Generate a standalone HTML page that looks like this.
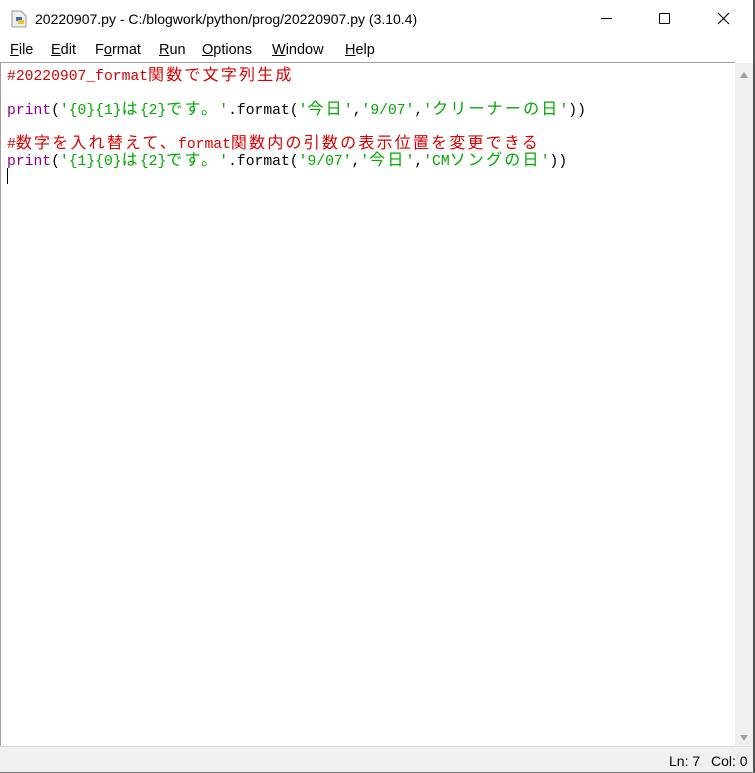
<html><head><style>
body{margin:0;width:755px;height:773px;background:#fff;font-family:"Liberation Sans",sans-serif;position:relative;overflow:hidden}
.win{position:absolute;left:0;top:0;width:753px;height:771px;border-right:2px solid #555;border-bottom:2px solid #777;}
.title{position:absolute;top:0;left:0;width:753px;height:38px;background:#fff}
.title .t{position:absolute;left:35px;top:11px;font-size:14px;color:#000}
.menu{position:absolute;top:38px;left:0;height:24px;width:753px;font-size:14.5px}
.menu span{position:absolute;top:4px}
.menu u{text-decoration:underline}
.ed{position:absolute;left:0;top:62px;width:734px;height:684px;border-top:1px solid #a0a0a0;border-left:1px solid #a0a0a0}
.code{position:absolute;left:7px;top:65px;font-family:"Liberation Mono",monospace;font-size:14.7px;white-space:pre}
.code div{height:17px;line-height:17px;overflow:visible}
.j{font-family:"Noto Sans CJK JP",sans-serif;font-size:16px;letter-spacing:2.2px;line-height:17px}
.c{color:#dd0000}.p{color:#900090}.s{color:#00aa00}
.sb{position:absolute;left:735px;top:63px;width:18px;height:683px;background:#f0f0f0}
.st{position:absolute;left:0;top:746px;width:753px;height:25px;background:#f0f0f0;border-top:1px solid #ddd;font-size:14px}
</style></head><body>
<div class="win">
<div class="title">
<svg style="position:absolute;left:11px;top:10px" width="16" height="18"><path d="M1 1h9l5 5v11H1z" fill="#eee" stroke="#999"/><rect x="5" y="7" width="6" height="4" fill="#3a6fb0"/><rect x="7" y="10" width="6" height="4" fill="#f0c030"/></svg>
<div class="t">20220907.py - C:/blogwork/python/prog/20220907.py (3.10.4)</div>
<div style="position:absolute;left:601px;top:18px;width:11px;height:1px;background:#000"></div>
<div style="position:absolute;left:659px;top:13px;width:9px;height:9px;border:1px solid #000;border-radius:1px"></div>
<svg style="position:absolute;left:717px;top:12px" width="13" height="13"><path d="M1 1L12 12M12 1L1 12" stroke="#000" stroke-width="1.1"/></svg>
</div>
<div class="menu">
<span style="left:10px"><u>F</u>ile</span>
<span style="left:51px"><u>E</u>dit</span>
<span style="left:95px">F<u>o</u>rmat</span>
<span style="left:159px"><u>R</u>un</span>
<span style="left:202px"><u>O</u>ptions</span>
<span style="left:272px"><u>W</u>indow</span>
<span style="left:345px"><u>H</u>elp</span>
</div>
<div class="ed"></div>
<div class="code"><div><span class="c">#20220907_format<span class="j">関数で文字列生成</span></span></div><div> </div><div><span class="p">print</span>(<span class="s">'{0}{1}<span class="j">は</span>{2}<span class="j">です。</span>'</span>.format(<span class="s">'<span class="j">今日</span>'</span>,<span class="s">'9/07'</span>,<span class="s">'<span class="j">クリーナーの日</span>'</span>))</div><div> </div><div><span class="c">#<span class="j">数字を入れ替えて、</span>format<span class="j">関数内の引数の表示位置を変更できる</span></span></div><div><span class="p">print</span>(<span class="s">'{1}{0}<span class="j">は</span>{2}<span class="j">です。</span>'</span>.format(<span class="s">'9/07'</span>,<span class="s">'<span class="j">今日</span>'</span>,<span class="s">'CM<span class="j">ソングの日</span>'</span>))</div></div>
<div style="position:absolute;left:7px;top:168px;width:1px;height:16px;background:#000"></div>
<div class="sb">
<svg style="position:absolute;left:4px;top:8px" width="10" height="8"><path d="M5 1L9 7H1z" fill="#a0a0a0"/></svg>
<svg style="position:absolute;left:4px;top:671px" width="10" height="8"><path d="M1 1H9L5 7z" fill="#a0a0a0"/></svg>
</div>
<div class="st"><span style="position:absolute;left:669px;top:6px">Ln: 7</span><span style="position:absolute;left:711px;top:6px">Col: 0</span></div>
</div>
</body></html>
